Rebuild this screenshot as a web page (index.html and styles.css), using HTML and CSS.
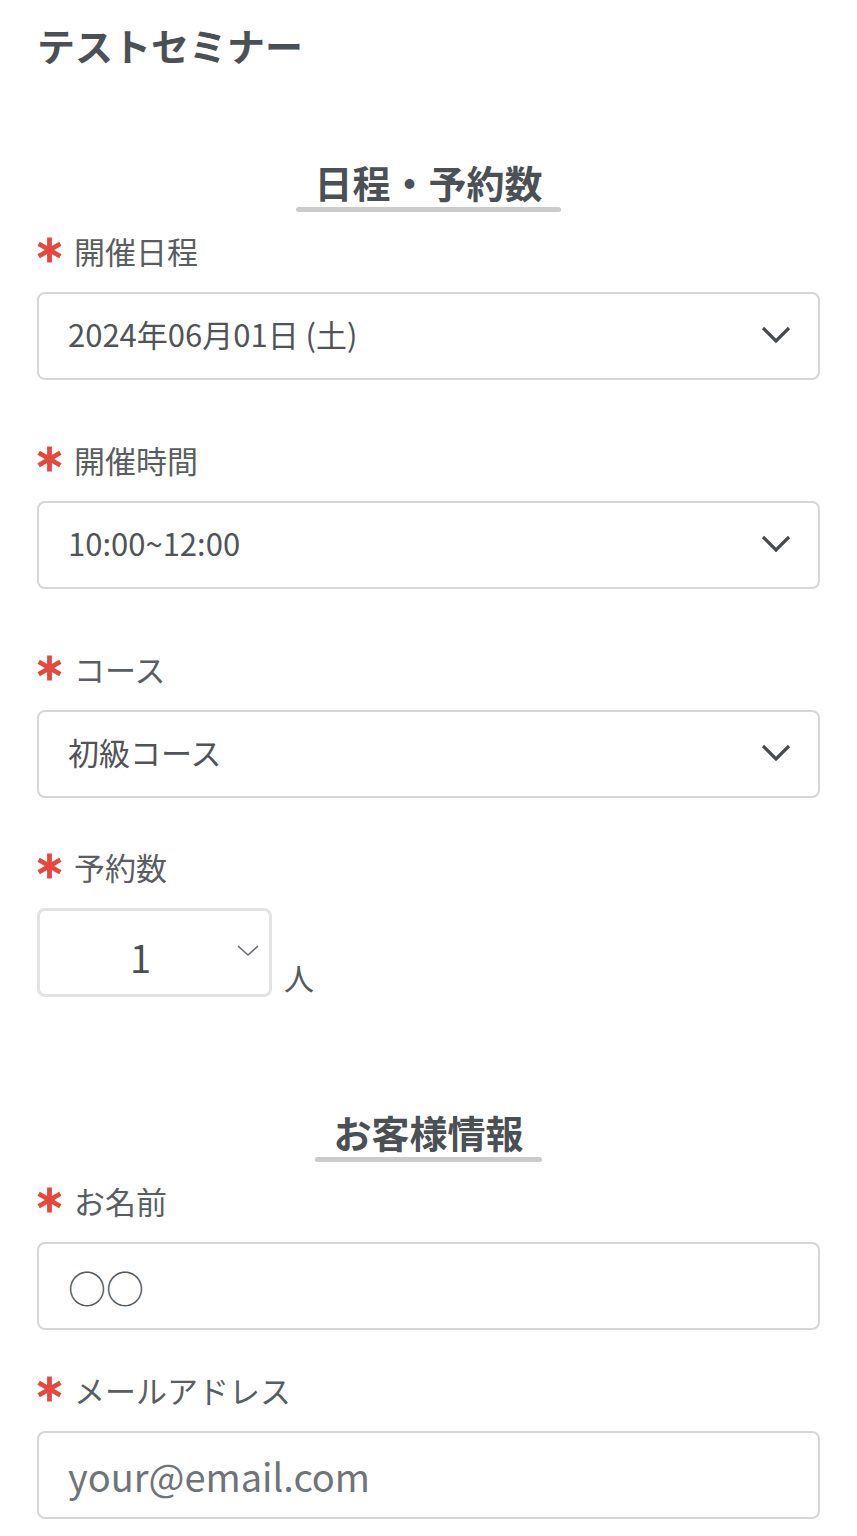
FILE: index.html
```html
<!DOCTYPE html>
<html lang="ja">
<head>
    <meta charset="UTF-8">
    <meta name="viewport" content="width=device-width, initial-scale=1.0">
    <title>テストセミナー</title>
    <link rel="stylesheet" href="styles.css">
</head>
<body>
    <main class="page">
        <h1 class="title">テストセミナー</h1>

        <section class="section">
            <h2 class="section-title"><span>日程・予約数</span></h2>

            <div class="field">
                <div class="label">
                    <svg class="req" viewBox="0 0 26 26"><g stroke="#e5483d" stroke-width="5"><line x1="13" y1="0" x2="13" y2="26"/><line x1="1.7" y1="6.5" x2="24.3" y2="19.5"/><line x1="1.7" y1="19.5" x2="24.3" y2="6.5"/></g></svg>
                    開催日程
                </div>
                <div class="select">
                    <span class="value">2024年06月01日 (土)</span>
                    <svg class="chevron" viewBox="0 0 30 18"><polyline points="2,2 15,15 28,2" fill="none" stroke="#484c50" stroke-width="3.2"/></svg>
                </div>
            </div>

            <div class="field">
                <div class="label">
                    <svg class="req" viewBox="0 0 26 26"><g stroke="#e5483d" stroke-width="5"><line x1="13" y1="0" x2="13" y2="26"/><line x1="1.7" y1="6.5" x2="24.3" y2="19.5"/><line x1="1.7" y1="19.5" x2="24.3" y2="6.5"/></g></svg>
                    開催時間
                </div>
                <div class="select">
                    <span class="value">10:00~12:00</span>
                    <svg class="chevron" viewBox="0 0 30 18"><polyline points="2,2 15,15 28,2" fill="none" stroke="#484c50" stroke-width="3.2"/></svg>
                </div>
            </div>

            <div class="field">
                <div class="label">
                    <svg class="req" viewBox="0 0 26 26"><g stroke="#e5483d" stroke-width="5"><line x1="13" y1="0" x2="13" y2="26"/><line x1="1.7" y1="6.5" x2="24.3" y2="19.5"/><line x1="1.7" y1="19.5" x2="24.3" y2="6.5"/></g></svg>
                    コース
                </div>
                <div class="select">
                    <span class="value">初級コース</span>
                    <svg class="chevron" viewBox="0 0 30 18"><polyline points="2,2 15,15 28,2" fill="none" stroke="#484c50" stroke-width="3.2"/></svg>
                </div>
            </div>

            <div class="field field-count">
                <div class="label">
                    <svg class="req" viewBox="0 0 26 26"><g stroke="#e5483d" stroke-width="5"><line x1="13" y1="0" x2="13" y2="26"/><line x1="1.7" y1="6.5" x2="24.3" y2="19.5"/><line x1="1.7" y1="19.5" x2="24.3" y2="6.5"/></g></svg>
                    予約数
                </div>
                <div class="count-row">
                    <div class="count-select">
                        <span class="count-value">1</span>
                        <svg class="chevron-sm" viewBox="0 0 22 12"><polyline points="1,1 11,10 21,1" fill="none" stroke="#6a6e72" stroke-width="1.6"/></svg>
                    </div>
                    <span class="unit">人</span>
                </div>
            </div>
        </section>

        <section class="section section-guest">
            <h2 class="section-title"><span>お客様情報</span></h2>

            <div class="field">
                <div class="label">
                    <svg class="req" viewBox="0 0 26 26"><g stroke="#e5483d" stroke-width="5"><line x1="13" y1="0" x2="13" y2="26"/><line x1="1.7" y1="6.5" x2="24.3" y2="19.5"/><line x1="1.7" y1="19.5" x2="24.3" y2="6.5"/></g></svg>
                    お名前
                </div>
                <div class="input"><span class="input-text">○○</span></div>
            </div>

            <div class="field field-mail">
                <div class="label">
                    <svg class="req" viewBox="0 0 26 26"><g stroke="#e5483d" stroke-width="5"><line x1="13" y1="0" x2="13" y2="26"/><line x1="1.7" y1="6.5" x2="24.3" y2="19.5"/><line x1="1.7" y1="19.5" x2="24.3" y2="6.5"/></g></svg>
                    メールアドレス
                </div>
                <div class="input"><span class="placeholder">your@email.com</span></div>
            </div>
        </section>
    </main>
</body>
</html>
```

FILE: styles.css
```css
body {
    margin: 0;
    padding: 0;
    background-color: #fff;
    font-family: "Noto Sans CJK JP", "Noto Sans", sans-serif;
    color: #555a5e;
}
.page {
    padding: 23px 37px 0;
}
.title {
    margin: 0;
    font-size: 38px;
    line-height: 44px;
    font-weight: bold;
    color: #4b5055;
}
.section {
    margin-top: 92px;
}
.section-guest {
    margin-top: 112px;
}
.section-title {
    margin: 0;
    text-align: center;
    font-size: 38px;
    line-height: 46px;
    font-weight: bold;
    color: #4b5055;
}
.section-title span {
    display: inline-block;
    padding: 0 18px 7px;
    position: relative;
}
.section-title span::after {
    content: "";
    position: absolute;
    left: 0;
    right: 0;
    bottom: 0;
    height: 5px;
    border-radius: 3px;
    background-color: #cbcbcb;
}
.field {
    margin-top: 62px;
}
.section-title + .field {
    margin-top: 21px;
}
.field-count {
    margin-top: 51px;
}
.field-mail {
    margin-top: 42px;
}
.label {
    display: flex;
    align-items: center;
    height: 40px;
    font-size: 31px;
    color: #5a5e62;
    margin-top: -3px;
    margin-bottom: 22px;
}
.req {
    width: 25px;
    height: 26px;
    margin-right: 12px;
}
.select,
.input {
    display: flex;
    align-items: center;
    height: 88px;
    box-sizing: border-box;
    border: 2px solid #d6d6d6;
    border-radius: 8px;
    padding: 0 27px 0 29px;
}
.value {
    flex: 1;
    font-size: 31px;
    color: #505458;
    padding-bottom: 6px;
}
.chevron {
    width: 30px;
    height: 18px;
    margin-top: -2px;
}
.count-row {
    display: flex;
    align-items: flex-end;
}
.count-select {
    display: flex;
    align-items: center;
    width: 235px;
    height: 89px;
    box-sizing: border-box;
    border: 3px solid #e3e3e3;
    border-radius: 8px;
    padding: 0 10px 0 0;
}
.count-value {
    flex: 1;
    text-align: center;
    font-size: 38px;
    color: #4b4f53;
    padding-top: 8px;
    padding-left: 4px;
}
.chevron-sm {
    width: 22px;
    height: 12px;
    margin-top: -4px;
}
.unit {
    font-size: 30px;
    color: #555a5e;
    margin-left: 12px;
    line-height: 36px;
    margin-bottom: 2px;
}
.input-text {
    font-size: 38px;
    color: #55595d;
}
.placeholder {
    font-size: 38px;
    color: #6f7479;
}
```
